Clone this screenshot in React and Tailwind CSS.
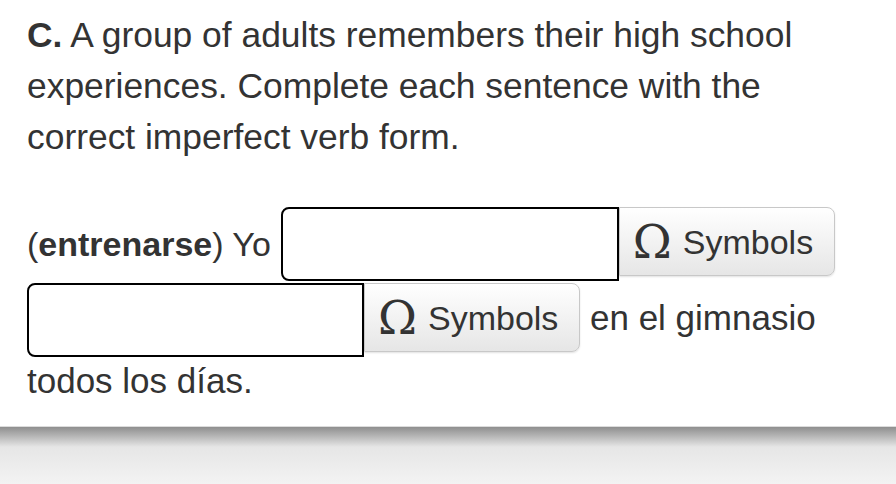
export default function App() {
  const font = { fontFamily: '"Liberation Sans", Arial, sans-serif' };
  const Btn = () => (
    <button className="flex h-[69px] w-[216px] shrink-0 items-center gap-[11px] rounded-r-[8px] border border-[#c8c8c8] bg-gradient-to-b from-[#ffffff] to-[#e6e6e6] pl-[13px] text-[#333] shadow-[0_1px_2px_rgba(0,0,0,0.12)]">
      <span className="font-['DejaVu_Serif',serif] text-[47px] leading-none">Ω</span>
      <span className="text-[34px] leading-none">Symbols</span>
    </button>
  );
  return (
    <div className="h-[484px] w-[896px] overflow-hidden bg-white text-[#333]" style={font}>
      <div className="h-[426px] px-[27px] pt-[10px] text-[35px] leading-[51px]">
        <p className="text-[35.4px]">
          <b className="font-bold">C.</b> A group of adults remembers their high school
          <br />
          experiences. Complete each sentence with the
          <br />
          correct imperfect verb form.
        </p>
        <div className="mt-[44px] flex items-start">
          <span className="mt-[12px] mr-[10px] text-[34px]">
            (<b className="font-bold">entrenarse</b>) Yo
          </span>
          <div className="h-[74px] w-[338px] shrink-0 rounded-l-[8px] border-2 border-black bg-white" />
          <Btn />
        </div>
        <div className="mt-[2px] flex items-start">
          <div className="h-[74px] w-[337px] shrink-0 rounded-l-[8px] border-2 border-black bg-white" />
          <Btn />
          <span className="mt-[9px] ml-[10px]">en el gimnasio</span>
        </div>
        <p className="-mt-[2px]">todos los días.</p>
      </div>
      <div className="h-[58px] border-t border-[#dcdcdc] bg-gradient-to-b from-[#8f8f8f] via-[#e6e6e6] via-35% to-[#f3f3f3]" />
    </div>
  );
}
